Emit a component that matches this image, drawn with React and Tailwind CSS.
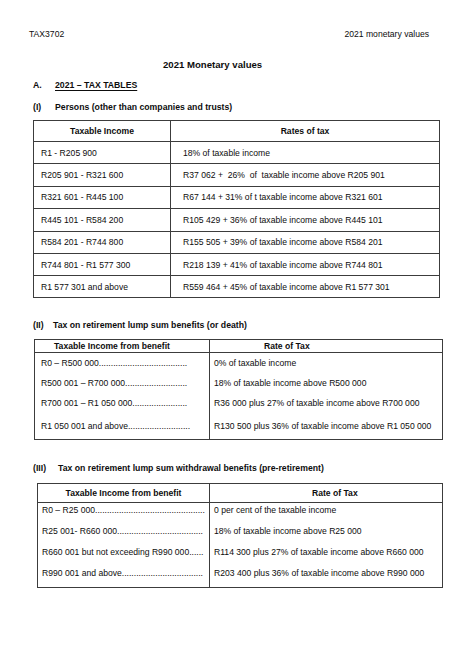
import React from 'react';

const personsRows = [
  ['R1 - R205 900', '18% of taxable income'],
  ['R205 901 - R321 600', 'R37 062 +  26%  of  taxable income above R205 901'],
  ['R321 601 - R445 100', 'R67 144 + 31% of t taxable income above R321 601'],
  ['R445 101 - R584 200', 'R105 429 + 36% of taxable income above R445 101'],
  ['R584 201 - R744 800', 'R155 505 + 39% of taxable income above R584 201'],
  ['R744 801 - R1 577 300', 'R218 139 + 41% of taxable income above R744 801'],
  ['R1 577 301 and above', 'R559 464 + 45% of taxable income above R1 577 301'],
];

// [label, dot count, rate]
const deathRows = [
  ['R0 – R500 000 ', 37, '0% of taxable income'],
  ['R500 001 – R700 000 ', 26, '18% of taxable income above R500 000'],
  ['R700 001 – R1 050 000 ', 23, 'R36 000 plus 27% of taxable income above R700 000'],
  ['R1 050 001 and above', 26, 'R130 500 plus 36% of taxable income above R1 050 000'],
];

const withdrawalRows = [
  ['R0 – R25 000', 46, '0 per cent of the taxable income'],
  ['R25 001- R660 000 ', 36, '18% of taxable income above R25 000'],
  ['R660 001 but not exceeding R990 000 ', 6, 'R114 300 plus 27% of taxable income above R660 000'],
  ['R990 001 and above ', 34, 'R203 400 plus 36% of taxable income above R990 000'],
];

// label followed by a dot leader
const Leader = ({ label, dots }) => (
  <div className="flex min-w-0 whitespace-nowrap">
    <span>{label}</span>
    <span className="flex-1 overflow-hidden">{'.'.repeat(dots)}</span>
  </div>
);

const Heading = ({ num, numWidth, children }) => (
  <div className="flex text-[8.7px] leading-[10px] font-bold">
    <span style={{ width: numWidth }}>{num}</span>
    <span>{children}</span>
  </div>
);

const App = () => {
  return (
    <div className="w-[474px] h-[669px] bg-white text-[#0d0d0d] font-['Liberation_Sans',Arial,sans-serif] overflow-hidden">
      {/* page header */}
      <div className="flex justify-between pt-[29px] pl-[29px] pr-[45px] text-[8.6px] leading-[10px]">
        <span>TAX3702</span>
        <span>2021 monetary values</span>
      </div>

      <div className="mt-[20px] pl-[163px] text-[9.6px] leading-[12px] font-bold">2021 Monetary values</div>

      <div className="pl-[33px]">
        <div className="mt-[9px]">
          <Heading num="A." numWidth={22}>
            <span className="underline underline-offset-[1.5px]">2021 – TAX TABLES</span>
          </Heading>
        </div>
        <div className="mt-[12px]">
          <Heading num="(I)" numWidth={22}>Persons (other than companies and trusts)</Heading>
        </div>

        {/* table I */}
        <div className="mt-[8px] w-[407px] border border-[#3c3c3c] text-[8.6px] leading-[10px]">
          <div className="grid grid-cols-[137px_1fr] h-[21px] border-b border-[#3c3c3c] font-bold">
            <div className="flex items-center justify-center border-r border-[#3c3c3c]">Taxable Income</div>
            <div className="flex items-center justify-center">Rates of tax</div>
          </div>
          {personsRows.map(([income, rate], i) => (
            <div
              key={i}
              className={`grid grid-cols-[137px_1fr] ${i < personsRows.length - 1 ? 'h-[22.4px] border-b border-[#3c3c3c]' : 'h-[20.5px]'}`}
            >
              <div className="flex items-center pl-[7px] border-r border-[#3c3c3c]">{income}</div>
              <div className="flex items-center pl-[12px] whitespace-pre">{rate}</div>
            </div>
          ))}
        </div>

        <div className="mt-[22px]">
          <Heading num="(II)" numWidth={20}>Tax on retirement lump sum benefits (or death)</Heading>
        </div>

        {/* table II */}
        <div className="mt-[9px] ml-[1px] w-[409px] border border-[#3c3c3c] text-[8.6px] leading-[10px]">
          <div className="grid grid-cols-[175px_1fr] h-[13px] border-b border-[#3c3c3c] font-bold">
            <div className="flex items-center pl-[19px] border-r border-[#3c3c3c]">Taxable Income from benefit</div>
            <div className="flex items-center pl-[54px]">Rate of Tax</div>
          </div>
          {deathRows.map(([income, dots, rate], i) => {
            const last = i === deathRows.length - 1;
            return (
              <div key={i} className={`grid grid-cols-[175px_1fr] ${last ? 'h-[26px]' : 'h-[20px]'}`}>
                <div className={`pl-[6px] pr-[17px] border-r border-[#3c3c3c] ${last ? 'pt-[8px]' : 'pt-[5px]'}`}>
                  <Leader label={income} dots={dots} />
                </div>
                <div className={`pl-[4px] whitespace-nowrap ${last ? 'pt-[8px]' : 'pt-[5px]'}`}>{rate}</div>
              </div>
            );
          })}
        </div>

        <div className="mt-[23px]">
          <Heading num="(III)" numWidth={25}>Tax on retirement lump sum withdrawal benefits (pre-retirement)</Heading>
        </div>

        {/* table III */}
        <div className="mt-[10px] ml-[4px] w-[406px] border border-[#3c3c3c] text-[8.6px] leading-[10px]">
          <div className="grid grid-cols-[172px_1fr] h-[19px] border-b border-[#3c3c3c] font-bold">
            <div className="flex items-center justify-center border-r border-[#3c3c3c]">Taxable Income from benefit</div>
            <div className="flex items-center pl-[102px]">Rate of Tax</div>
          </div>
          {withdrawalRows.map(([income, dots, rate], i) => (
            <div key={i} className="grid grid-cols-[172px_1fr] h-[21px]">
              <div className="pl-[4px] pr-[2px] pt-[2px] border-r border-[#3c3c3c]">
                <Leader label={income} dots={dots} />
              </div>
              <div className="pl-[4px] pt-[2px] whitespace-nowrap">{rate}</div>
            </div>
          ))}
        </div>
      </div>
    </div>
  );
};

export default App;
